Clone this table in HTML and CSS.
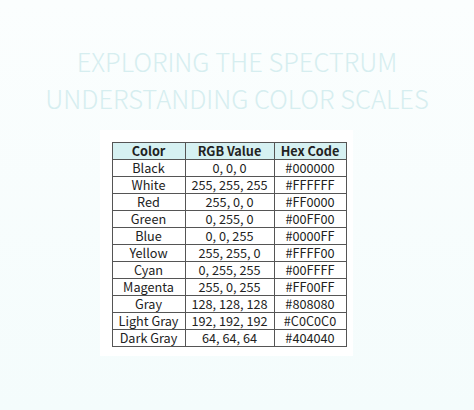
FILE: index.html
```html
<!DOCTYPE html>
<html>
<head>
<meta charset="utf-8">
<link rel="stylesheet" href="styles.css">
</head>
<body>
<div class="page">
  <h1 class="title"><span>EXPLORING THE SPECTRUM</span><span>UNDERSTANDING COLOR SCALES</span></h1>
  <div class="panel">
    <table class="scale">
      <colgroup><col class="c1"><col class="c2"><col class="c3"></colgroup>
      <thead>
        <tr><th>Color</th><th>RGB Value</th><th>Hex Code</th></tr>
      </thead>
      <tbody>
        <tr><td>Black</td><td>0, 0, 0</td><td>#000000</td></tr>
        <tr><td>White</td><td>255, 255, 255</td><td>#FFFFFF</td></tr>
        <tr><td>Red</td><td>255, 0, 0</td><td>#FF0000</td></tr>
        <tr><td>Green</td><td>0, 255, 0</td><td>#00FF00</td></tr>
        <tr><td>Blue</td><td>0, 0, 255</td><td>#0000FF</td></tr>
        <tr><td>Yellow</td><td>255, 255, 0</td><td>#FFFF00</td></tr>
        <tr><td>Cyan</td><td>0, 255, 255</td><td>#00FFFF</td></tr>
        <tr><td>Magenta</td><td>255, 0, 255</td><td>#FF00FF</td></tr>
        <tr><td>Gray</td><td>128, 128, 128</td><td>#808080</td></tr>
        <tr><td>Light Gray</td><td>192, 192, 192</td><td>#C0C0C0</td></tr>
        <tr><td>Dark Gray</td><td>64, 64, 64</td><td>#404040</td></tr>
      </tbody>
    </table>
  </div>
</div>
</body>
</html>
```

FILE: styles.css
```css
html, body {
  margin: 0;
  padding: 0;
}
body {
  width: 474px;
  height: 410px;
  overflow: hidden;
  background: linear-gradient(to bottom, #fbfefe 0%, #f4fcfc 100%);
}
.page {
  display: flex;
  flex-direction: column;
  align-items: center;
  padding-top: 42px;
}
.title {
  margin: 0;
  display: flex;
  flex-direction: column;
  align-items: center;
  font-family: "Noto Sans CJK SC", "Noto Sans", sans-serif;
  font-weight: 300;
  font-size: 25.5px;
  line-height: 37px;
  color: #d6eef0;
}
.panel {
  margin-top: 14px;
  margin-left: -22px;
  background: #ffffff;
  padding: 12px 6px 9px 12px;
}
.scale {
  border-collapse: collapse;
  table-layout: fixed;
  width: 234px;
  font-family: "Noto Sans CJK SC", "Noto Sans", sans-serif;
  font-size: 12.7px;
  color: #222222;
}
.scale th, .scale td {
  border: 1px solid #555;
  height: 16px;
  padding: 0;
  text-align: center;
  line-height: 16px;
  white-space: nowrap;
}
.scale th {
  background: #d6f1f2;
  font-weight: 700;
}
.c1 { width: 73px; }
.c2 { width: 89px; }
.c3 { width: 72px; }
```
